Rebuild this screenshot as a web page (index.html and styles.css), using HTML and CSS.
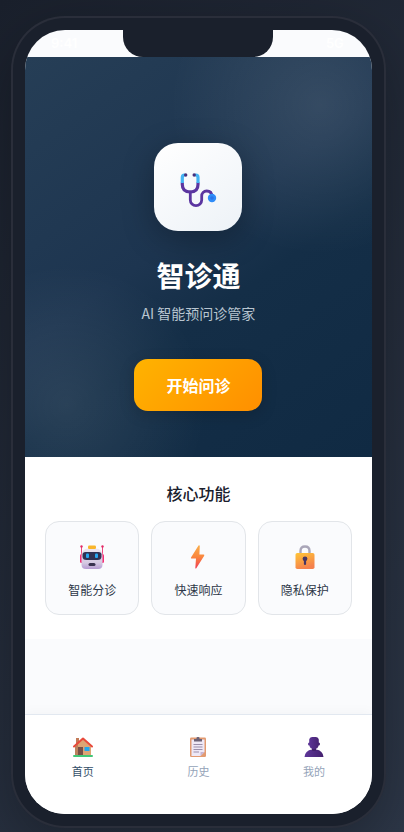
FILE: index.html
```html
<!DOCTYPE html>
<html lang="zh-CN">
<head>
<meta charset="utf-8">
<meta name="viewport" content="width=device-width, initial-scale=1">
<title>智诊通</title>
<link rel="stylesheet" href="styles.css">
</head>
<body>
<div class="phone">
  <div class="screen">
    <div class="notch"></div>
    <header class="status-bar"><span>9:41</span><span>5G</span></header>
    <main class="content">
      <section class="hero">
        <div class="logo">
          <svg width="40" height="40" viewBox="0 0 40 40" fill="none" stroke-linecap="round" aria-hidden="true">
            <path d="M12.3 25v8a5.7 5.7 0 0 0 11.4 0v-4c0-3 2-5 5-5s5.3 2 5.3 6" stroke="#5b35a0" stroke-width="2.8"/>
            <path d="M4.3 16v1.500c0 5 3.200 7.500 8 7.500s7.700-2.500 7.700-7.500V16" stroke="#5b35a0" stroke-width="3.200"/>
            <path d="M7 8H6.500Q4.300 8 4.300 10.500V16M17 8h.800Q20 8 20 10.500V16" stroke="#45b4f3" stroke-width="3.200" stroke-linecap="butt"/>
            <circle cx="7.700" cy="8" r="1.700" fill="#46307c"/>
            <circle cx="16.200" cy="8" r="1.700" fill="#46307c"/>
            <circle cx="34" cy="31" r="4.200" fill="#2f8cf8"/>
            <circle cx="34" cy="31" r="1.800" fill="#2a74e8"/>
          </svg>
        </div>
        <h1>智诊通</h1>
        <p>AI 智能预问诊管家</p>
        <button class="start" type="button">开始问诊</button>
      </section>
      <section class="features">
        <h2>核心功能</h2>
        <div class="cards">
          <article class="card">
            <svg width="24" height="24" viewBox="0 0 24 24" aria-hidden="true">
              <defs><linearGradient id="robot" x2="0" y2="1"><stop stop-color="#eee6f1"/><stop offset=".7" stop-color="#d5c9e2"/><stop offset="1" stop-color="#b69bd2"/></linearGradient></defs>
              <path d="M1.500 1v13M22.500 1v13" stroke="#ee477d" stroke-width="1"/>
              <circle cx="1.500" cy="1.500" r="1.200" fill="#e22b66"/><circle cx="22.500" cy="1.500" r="1.200" fill="#e22b66"/>
              <rect y="9" width="4" height="9" rx="1.500" fill="#f52e74"/><rect x="20" y="9" width="4" height="9" rx="1.500" fill="#f52e74"/>
              <path d="M1.500 11q0-7.500 7-7.500h7q7 0 7 7.500v8.500q0 4.500-4.500 4.500H6q-4.500 0-4.500-4.500Z" fill="url(#robot)"/>
              <rect x="8" y=".5" width="8" height="3.500" rx="1.200" fill="#f9b62c"/>
              <path d="M2.500 9.500q0-2.500 3-2.500h13q3 0 3 2.500v2q0 3.500-4 3.500h-11q-4 0-4-3.500Z" fill="#303153"/>
              <rect x="6" y="8.500" width="3" height="4.500" rx="1" fill="#28a6ef"/><rect x="15" y="8.500" width="3" height="4.500" rx="1" fill="#28a6ef"/>
              <rect x="8.500" y="18" width="7" height="3" rx="1.500" fill="#39324f"/>
            </svg>
            <h3>智能分诊</h3>
          </article>
          <article class="card">
            <svg width="24" height="24" viewBox="0 0 24 24" aria-hidden="true">
              <defs><linearGradient id="bolt" x2="0" y2="1"><stop stop-color="#f9ae4b"/><stop offset=".5" stop-color="#fa863e"/><stop offset="1" stop-color="#ef3c55"/></linearGradient></defs>
              <path d="M12.500.500 5 12.500q-.400 1 .500 1H10L9.300 23q.300 1 1 .200l7.900-12.400q.500-1.300-.700-1.300h-4.100l.400-8.500q-.300-1.200-1.300-.500Z" fill="url(#bolt)"/>
            </svg>
            <h3>快速响应</h3>
          </article>
          <article class="card">
            <svg width="24" height="24" viewBox="0 0 24 24" aria-hidden="true">
              <defs><linearGradient id="lock" x2=".4" y2="1"><stop stop-color="#ffc536"/><stop offset="1" stop-color="#f5814d"/></linearGradient></defs>
              <path d="M7.500 10V6q0-4.500 4.500-4.500T16.500 6v4" fill="none" stroke="#aaa6b8" stroke-width="2.400"/>
              <rect x="2.500" y="8" width="19" height="16" rx="1.800" fill="url(#lock)"/>
              <circle cx="12" cy="13.800" r="2.400" fill="#473563"/><path d="M12 14.500V19" stroke="#473563" stroke-width="2.200" stroke-linecap="round"/>
            </svg>
            <h3>隐私保护</h3>
          </article>
        </div>
      </section>
    </main>
    <nav class="tabs">
      <a class="tab active" href="#home">
        <svg width="20" height="20" viewBox="0 0 20 20" aria-hidden="true">
          <rect x="3" y="1" width="3" height="7" fill="#c37b58"/>
          <path d="M10 2 2 9.500V19h16V9.500Z" fill="#dda575"/><path d="M2 9.500 5 7v12H2Z" fill="#bc825d"/>
          <path d="m1 9.500 9-8 9 8" fill="none" stroke="#e84a3b" stroke-width="2" stroke-linecap="round" stroke-linejoin="round"/>
          <rect x="5" y="10" width="5" height="8.500" fill="#785047"/><rect x="11.500" y="10" width="5" height="4" fill="#21a6ef"/>
          <rect y="18" width="20" height="2" rx="1" fill="#43c777"/>
        </svg>
        <span>首页</span>
      </a>
      <a class="tab" href="#history">
        <svg width="20" height="20" viewBox="0 0 20 20" aria-hidden="true">
          <rect x="2" y=".5" width="16" height="19.500" rx="1.200" fill="#e29a70"/>
          <path d="M3.500 2.500h13v12.500L12.500 19h-9Z" fill="#eee8f6"/><path d="M12.500 19v-4h4Z" fill="#c6b4d2"/>
          <path d="M5.500 7.500h9M5.500 10h9M5.500 12.500h9M5.500 15H11" stroke="#9b8fab" stroke-width="1"/>
          <path d="M6 2h2.500V1q0-1 1-1h1q1 0 1 1v1H14v2.500H6Z" fill="#6b6277"/>
        </svg>
        <span>历史</span>
      </a>
      <a class="tab" href="#profile">
        <svg width="20" height="20" viewBox="0 0 20 20" aria-hidden="true">
          <defs><linearGradient id="person"><stop stop-color="#5e3699"/><stop offset="1" stop-color="#44216f"/></linearGradient></defs>
          <path d="M.5 20Q1 13.500 8 12.500h4q7 1 7.500 7.500Z" fill="url(#person)"/>
          <path d="M8 10h4v3.500q-2 1-4 0Z" fill="#42216c"/>
          <path d="M5.200 2.500Q5.500 0 8 0h4q2.500 0 2.800 2.500v3q1.200 0 1.200 1.500t-1.400 1.500Q14 12 10 12T5.400 8.500Q4 8.500 4 7t1.200-1.500Z" fill="url(#person)"/>
        </svg>
        <span>我的</span>
      </a>
    </nav>
  </div>
</div>
</body>
</html>
```

FILE: styles.css
```css
* { box-sizing: border-box; }

body {
  margin: 0;
  min-height: 100vh;
  padding: 18px 5% 6px 13px;
  display: flex;
  justify-content: center;
  background: linear-gradient(135deg, #1a202c, #2d3748);
  font-family: "Noto Sans CJK SC", sans-serif;
}

h1, h2, h3, p { margin: 0; }

.phone {
  display: flex;
  width: 100%;
  max-width: 420px;
  padding: 12px;
  border-radius: 52px;
  background: #1a202c;
  box-shadow: 0 0 0 2px #2a2e3a, 0 20px 60px rgba(0, 0, 0, 0.3);
}

.screen {
  position: relative;
  display: flex;
  flex: 1;
  flex-direction: column;
  overflow: hidden;
  border-radius: 40px;
  background: #fafbfd;
}

.notch {
  position: absolute;
  top: 0;
  left: 50%;
  width: 150px;
  height: 27px;
  margin-left: -75px;
  border-radius: 0 0 20px 20px;
  background: #1a202c;
}

.status-bar {
  display: flex;
  justify-content: space-between;
  height: 27px;
  padding: 0 28px 0 26px;
  color: #fff;
  font-family: Inter, sans-serif;
  font-size: 13px;
  font-weight: 600;
  line-height: 27px;
}

.content { flex: 1; }

.hero {
  display: flex;
  flex-direction: column;
  align-items: center;
  padding: 86px 20px 46px;
  background:
    radial-gradient(circle at 85% 12%, rgba(255, 255, 255, 0.1), transparent 150px),
    radial-gradient(circle at 12% 87%, rgba(255, 255, 255, 0.09), transparent 140px),
    linear-gradient(145deg, #263e56, #1d3550 45%, #142e47 60%, #102a43);
}

.logo {
  display: grid;
  place-items: center;
  width: 88px;
  height: 88px;
  margin-bottom: 24px;
  border-radius: 24px;
  background: linear-gradient(145deg, #fff, #edf2f7);
  box-shadow: 0 8px 32px rgba(0, 0, 0, 0.28);
}

.hero h1 {
  color: #fff;
  font-size: 28px;
  font-weight: 700;
  line-height: 40px;
}

.hero p {
  margin: 8px 0 36px;
  color: #b8c5d0;
  font-size: 14px;
  line-height: 20px;
}

.start {
  height: 52px;
  padding: 0 32px;
  border: 0;
  border-radius: 14px;
  background: linear-gradient(135deg, #ffb300, #ff8f00);
  box-shadow: 0 4px 16px rgba(0, 0, 0, 0.16);
  color: #fff;
  font: 600 16px/24px "Noto Sans CJK SC", sans-serif;
  cursor: pointer;
}

.features {
  padding: 24px 20px;
  background: #fff;
}

.features h2 {
  margin-bottom: 16px;
  color: #1a202c;
  font-size: 16px;
  font-weight: 500;
  line-height: 24px;
  text-align: center;
}

.cards {
  display: grid;
  grid-template-columns: repeat(3, 1fr);
  gap: 12px;
}

.card {
  display: flex;
  flex-direction: column;
  align-items: center;
  gap: 12px;
  padding: 23px 8px 15px;
  border: 1px solid #e2e5e9;
  border-radius: 14px;
  background: #fafbfd;
}

.card h3 {
  color: #2d3748;
  font-size: 12px;
  font-weight: 400;
  line-height: 18px;
}

.tabs {
  display: grid;
  grid-template-columns: repeat(3, 1fr);
  padding: 22px 0 35px;
  border-top: 1px solid #e2e8f0;
  background: #fff;
  box-shadow: 0 -2px 12px rgba(0, 0, 0, 0.03);
}

.tab {
  display: flex;
  flex-direction: column;
  align-items: center;
  gap: 6px;
  color: #94a3b8;
  font-size: 11px;
  line-height: 16px;
  text-decoration: none;
}

.tab.active { color: #334e68; }

svg { display: block; overflow: visible; }
```
